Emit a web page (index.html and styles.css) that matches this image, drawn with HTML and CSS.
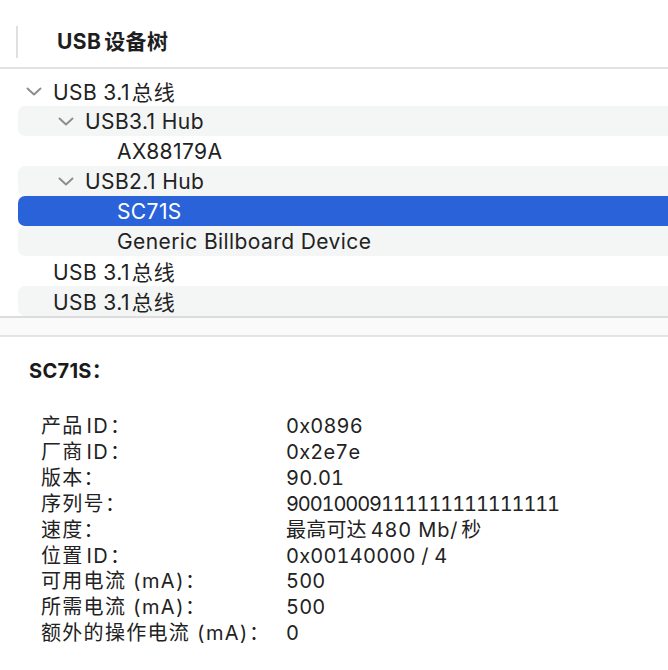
FILE: index.html
```html
<!DOCTYPE html>
<html lang="zh-CN">
<head>
<meta charset="utf-8">
<title>USB设备树</title>
<link rel="stylesheet" href="styles.css">
</head>
<body>
<div class="header">
  <div class="col-sep"></div>
  <h1 class="title"><span class="latin">USB</span>设备树</h1>
</div>
<div class="tree">
  <div class="row lvl0"><span class="chev"><svg width="16" height="9" viewBox="0 0 16 9"><path d="M1.5 1.5 L8 7.5 L14.5 1.5" fill="none" stroke="#8c8c8c" stroke-width="1.9" stroke-linecap="round" stroke-linejoin="round"/></svg></span><span class="label">USB 3.1<span class="cjk">总线</span></span></div>
  <div class="row lvl1 alt"><span class="chev"><svg width="16" height="9" viewBox="0 0 16 9"><path d="M1.5 1.5 L8 7.5 L14.5 1.5" fill="none" stroke="#8c8c8c" stroke-width="1.9" stroke-linecap="round" stroke-linejoin="round"/></svg></span><span class="label">USB3.1 Hub</span></div>
  <div class="row lvl2"><span class="label">AX88179A</span></div>
  <div class="row lvl1 alt"><span class="chev"><svg width="16" height="9" viewBox="0 0 16 9"><path d="M1.5 1.5 L8 7.5 L14.5 1.5" fill="none" stroke="#8c8c8c" stroke-width="1.9" stroke-linecap="round" stroke-linejoin="round"/></svg></span><span class="label">USB2.1 Hub</span></div>
  <div class="row lvl2 selected"><span class="label">SC71S</span></div>
  <div class="row lvl2 alt"><span class="label">Generic Billboard Device</span></div>
  <div class="row lvl0 leaf"><span class="label">USB 3.1<span class="cjk">总线</span></span></div>
  <div class="row lvl0 leaf alt"><span class="label">USB 3.1<span class="cjk">总线</span></span></div>
</div>
<div class="band"></div>
<div class="detail">
  <h2 class="dev-name">SC71S：</h2>
  <div class="props">
    <div class="k">产品<span class="lat">ID</span>：</div><div class="v">0x0896</div>
    <div class="k">厂商<span class="lat">ID</span>：</div><div class="v">0x2e7e</div>
    <div class="k">版本：</div><div class="v">90.01</div>
    <div class="k">序列号：</div><div class="v serial">90010009111111111111111</div>
    <div class="k">速度：</div><div class="v">最高可达<span class="lat wide">480 Mb/</span>秒</div>
    <div class="k">位置<span class="lat">ID</span>：</div><div class="v">0x00140000 / 4</div>
    <div class="k">可用电流 (mA)：</div><div class="v">500</div>
    <div class="k">所需电流 (mA)：</div><div class="v">500</div>
    <div class="k">额外的操作电流 (mA)：</div><div class="v">0</div>
  </div>
</div>
</body>
</html>
```
FILE: styles.css
```css
* { box-sizing: border-box; }
html, body { margin: 0; padding: 0; background: #ffffff; }
body {
  font-family: "Inter", "Noto Sans CJK SC", sans-serif;
  color: #222222;
  width: 668px;
  overflow: hidden;
}
.header {
  height: 69px;
  display: flex;
  align-items: flex-start;
  border-bottom: 2px solid #e2e2e2;
  padding-top: 26px;
}
.col-sep {
  width: 2px;
  height: 32px;
  margin-left: 16px;
  background: #e0e0e0;
}
.title {
  margin: 0 0 0 39px;
  font-size: 21px;
  font-weight: 700;
  line-height: 32px;
  letter-spacing: 0.4px;
  color: #1e1e1e;
}
.title .latin { margin-right: 3px; }
.tree {
  padding-top: 7px;
  padding-left: 18px;
}
.row {
  height: 30px;
  display: flex;
  align-items: center;
  font-size: 21px;
  letter-spacing: 0.4px;
  border-radius: 7px 0 0 7px;
  color: #222222;
}
.row.alt { background: #f4f5f5; }
.row.selected { background: #2a63d9; color: #ffffff; }
.chev {
  width: 16px;
  display: flex;
  align-items: center;
  margin-right: 11px;
}
.lvl0 { padding-left: 8px; }
.lvl1 { padding-left: 40px; }
.lvl2 { padding-left: 99px; }
.lvl0.leaf { padding-left: 35px; }
.label { white-space: nowrap; }
.cjk { margin-left: 2px; letter-spacing: 1px; }
.band {
  height: 21px;
  background: #fafafa;
  border-top: 2px solid #dcdcdc;
  border-bottom: 2px solid #e4e4e4;
}
.detail {
  padding: 22px 0 0 29px;
}
.dev-name {
  margin: 0;
  font-size: 20px;
  font-weight: 700;
  line-height: 24px;
  letter-spacing: 0.3px;
  color: #1a1a1a;
}
.props {
  margin-top: 31px;
  margin-left: 12px;
  display: grid;
  grid-template-columns: 245px auto;
  font-size: 20px;
  line-height: 25.9px;
  letter-spacing: 0.2px;
  font-variant-numeric: tabular-nums;
  color: #222222;
}
.k, .v { white-space: nowrap; }
.k { letter-spacing: 1.3px; }
.lat { margin: 0 1px 0 3px; }
.lat.wide { margin: 0 3px 0 4px; letter-spacing: 0.8px; }
.serial { letter-spacing: -1.1px; }
```
